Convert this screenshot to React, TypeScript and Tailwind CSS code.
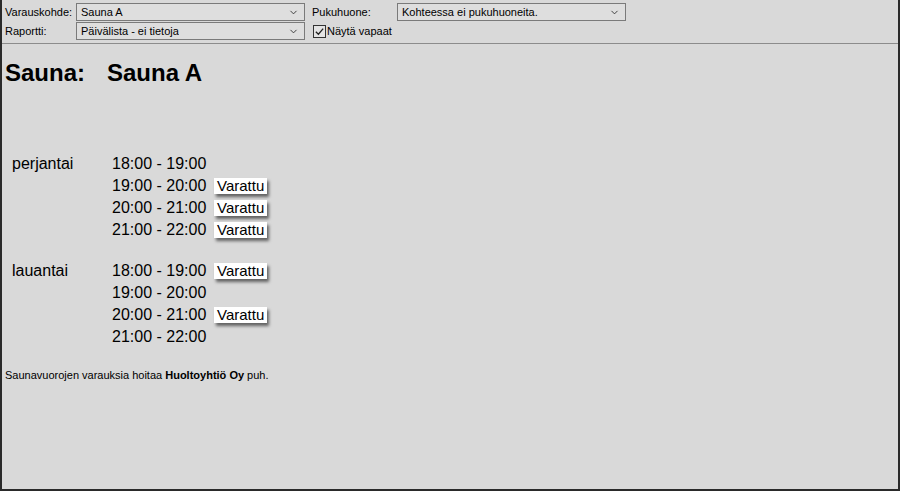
import { ChevronDown } from 'lucide-react'

type Slot = { time: string; booked: boolean }
type Day = { name: string; slots: Slot[] }

const days: Day[] = [
  {
    name: 'perjantai',
    slots: [
      { time: '18:00 - 19:00', booked: false },
      { time: '19:00 - 20:00', booked: true },
      { time: '20:00 - 21:00', booked: true },
      { time: '21:00 - 22:00', booked: true },
    ],
  },
  {
    name: 'lauantai',
    slots: [
      { time: '18:00 - 19:00', booked: true },
      { time: '19:00 - 20:00', booked: false },
      { time: '20:00 - 21:00', booked: true },
      { time: '21:00 - 22:00', booked: false },
    ],
  },
]

function FakeSelect({ value }: { value: string }) {
  return (
    <div className="flex h-[18px] w-[229px] items-center justify-between border border-[#7a7a7a] bg-[#dedede] pl-[4px] pr-[5px]">
      <span className="truncate">{value}</span>
      <ChevronDown className="h-[11px] w-[11px] text-[#333]" strokeWidth={2} />
    </div>
  )
}

function Checkbox() {
  return (
    <span className="flex h-[13px] w-[13px] items-center justify-center border border-[#333] bg-[#e4e4e4]">
      <svg viewBox="0 0 12 12" className="h-[11px] w-[11px]">
        <path d="M2 6.2 L4.8 9 L10 2.8" fill="none" stroke="#222" strokeWidth="1.4" />
      </svg>
    </span>
  )
}

export default function App() {
  return (
    <div
      className="h-[491px] w-[900px] overflow-hidden border-b-2 border-l-2 border-r-2 border-[#2a2a2a] bg-[#d9d9d9] text-black"
      style={{ fontFamily: '"Liberation Sans", Arial, sans-serif' }}
    >
      {/* Filter bar */}
      <div className="grid grid-cols-[71px_229px_92px_229px] items-center gap-y-[1px] border-b border-[#8c8c8c] pb-[3px] pl-[3px] pt-[3px] text-[11px] leading-none">
        <span>Varauskohde:</span>
        <FakeSelect value="Sauna A" />
        <span className="pl-[7px]">Pukuhuone:</span>
        <FakeSelect value="Kohteessa ei pukuhuoneita." />

        <span>Raportti:</span>
        <FakeSelect value="Päivälista - ei tietoja" />
        <label className="col-span-2 flex items-center gap-[1px] pl-[8px]">
          <Checkbox />
          <span>Näytä vapaat</span>
        </label>
      </div>

      <div className="pl-[3px]">
        <h1 className="mt-[17px] flex text-[24px] font-bold leading-none">
          <span className="w-[102px]">Sauna:</span>
          <span>Sauna A</span>
        </h1>

        {/* Day schedule */}
        <div className="ml-[7px] mt-[68px] flex flex-col gap-[19px] text-[16px] leading-[22px]">
          {days.map((day) => (
            <div key={day.name} className="flex">
              <div className="w-[100px]">{day.name}</div>
              <div className="flex flex-col">
                {day.slots.map((slot) => (
                  <div key={slot.time} className="flex items-center">
                    <span className="w-[102px]">{slot.time}</span>
                    {slot.booked && (
                      <span className="bg-white px-[3px] text-[15px] leading-[16px] shadow-[2px_3px_3px_rgba(0,0,0,0.55)]">
                        Varattu
                      </span>
                    )}
                  </div>
                ))}
              </div>
            </div>
          ))}
        </div>

        <p className="mt-[19px] text-[11px]">
          Saunavuorojen varauksia hoitaa <b>Huoltoyhtiö Oy</b> puh.
        </p>
      </div>
    </div>
  )
}
